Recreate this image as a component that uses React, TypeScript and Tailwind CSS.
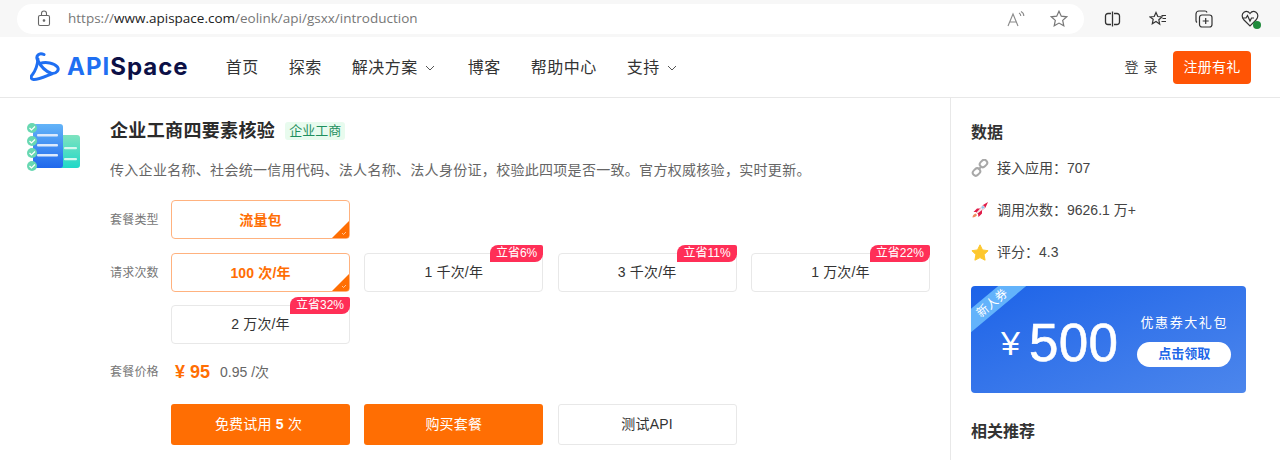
import React from "react";

const F = "font-['Liberation_Sans','Noto_Sans_CJK_SC',sans-serif]";

function Opt({ label, badge, selected }: { label: string; badge?: string; selected?: boolean }) {
  return (
    <div
      className={
        "relative w-[179px] h-[39px] rounded-[4px] border flex items-center justify-center text-[14px] tracking-[0.15px] " +
        (selected ? "border-[#ffb27f] text-[#ff6e03] font-bold pt-[1px]" : "border-[#e8e8e8] text-[#333333]")
      }
    >
      {label}
      {badge && (
        <span className="absolute right-[-1px] top-[-9px] h-[17px] px-[6px] rounded-tl-[8px] rounded-br-[8px] rounded-tr-[2px] bg-[#ff2f57] text-white text-[12px] leading-[17px] tracking-normal font-normal">
          {badge}
        </span>
      )}
      {selected && (
        <svg className="absolute right-0 bottom-0" width="17" height="17" viewBox="0 0 17 17">
          <path d="M17 0V15a2 2 0 0 1-2 2H0Z" fill="#ff6e03" />
          <path d="M10 12l1.5 1.5L14 11" stroke="#ffd9bd" strokeWidth="0.8" fill="none" />
        </svg>
      )}
    </div>
  );
}

function Label({ children }: { children: React.ReactNode }) {
  return <div className="w-[61px] shrink-0 text-[12px] tracking-[0.2px] text-[#777777]">{children}</div>;
}

function Logo() {
  return (
    <svg width="33" height="30" viewBox="4 3 33 30" fill="none" stroke="#1f6ff2" strokeWidth="3" strokeLinecap="round" strokeLinejoin="round">
      <path d="M18 5.5C13 3 9.5 7 11.5 11C14.5 17 20 22.5 25.5 24.5" />
      <path d="M14 14.5C20 12.5 28 14 31.5 18C33.5 21 30.5 24.5 26.5 24.5C20 27 12 31 7.5 30.5C4.5 30 4.5 27.5 6.5 25.5C9.5 21.5 11.5 16 12 10" />
    </svg>
  );
}

function ProductIcon() {
  return (
    <svg width="56" height="50" viewBox="0 0 56 50">
      <defs>
        <linearGradient id="pb" x1="0" y1="0" x2="0" y2="1">
          <stop offset="0" stopColor="#63b4f8" />
          <stop offset="1" stopColor="#1f68ec" />
        </linearGradient>
        <linearGradient id="pg" x1="0" y1="0" x2="0" y2="1">
          <stop offset="0" stopColor="#7fe3bf" />
          <stop offset="1" stopColor="#1fd8c8" />
        </linearGradient>
      </defs>
      <rect x="26" y="12" width="28" height="33" rx="3" fill="url(#pg)" />
      <rect x="38" y="24" width="13" height="2.2" rx="1" fill="#d6f7ee" />
      <rect x="38" y="35" width="13" height="2.2" rx="1" fill="#d6f7ee" />
      <rect x="7" y="1" width="30" height="44" rx="3" fill="url(#pb)" />
      {[11, 21, 31].map((y) => (
        <rect key={y} x="11" y={y} width="21" height="2.4" rx="1" fill="#dbe9fc" />
      ))}
      {[5, 18, 30, 43].map((y) => (
        <g key={y}>
          <circle cx="6" cy={y} r="5" fill="#68d8b2" />
          <path d={`M3.5 ${y}l2 2 3.5-3.5`} stroke="#fff" strokeWidth="1.2" fill="none" />
        </g>
      ))}
    </svg>
  );
}

export default function App() {
  return (
    <div className={"w-[1280px] h-[460px] overflow-hidden bg-white " + F}>
      {/* browser bar */}
      <div className="h-[37px] bg-[#f7f7f7] flex items-center pl-[17px] pr-[18px]">
        <div className="w-[1067px] h-[30px] bg-white rounded-full flex items-center pl-[20px] pr-[16px]">
          <svg width="14" height="17" viewBox="0 0 14 17" fill="none" stroke="#666" strokeWidth="1.1">
            <rect x="1.5" y="5.5" width="11" height="10" rx="1.5" />
            <path d="M4.5 5.5V3.5a2.5 2.5 0 0 1 5 0v2" />
            <circle cx="7" cy="10.5" r="0.8" fill="#666" />
          </svg>
          <div className="ml-[17px] text-[13.5px] text-[#777777] font-['Open_Sans',sans-serif]">
            https://<span className="text-[#222222]">www.apispace.com</span>/eolink/api/gsxx/introduction
          </div>
          <div className="ml-auto flex items-center gap-[25px]">
            <svg width="18" height="16" viewBox="0 0 18 16" fill="none" stroke="#8a8a8a" strokeWidth="1.1">
              <path d="M1 15L6 3l5 12M2.8 11h6.4" />
              <path d="M12 2c1.2.6 1.8 1.6 1.8 3M14 .6c1.8.9 2.8 2.5 2.8 4.4" />
            </svg>
            <svg width="18" height="17" viewBox="0 0 18 17" fill="none" stroke="#777" strokeWidth="1.2">
              <path d="M9 1.2l2.3 5 5.4.6-4 3.6 1.1 5.4L9 13.1l-4.8 2.7 1.1-5.4-4-3.6 5.4-.6z" />
            </svg>
          </div>
        </div>
        <div className="ml-[20px] flex items-center gap-[28px]">
          <svg width="17" height="16" viewBox="0 0 17 16" fill="none" stroke="#333" strokeWidth="1.3">
            <path d="M7 2.5H4A2.5 2.5 0 0 0 1.5 5v6A2.5 2.5 0 0 0 4 13.5h3M10 2.5h3A2.5 2.5 0 0 1 15.5 5v6a2.5 2.5 0 0 1-2.5 2.5h-3" />
            <path d="M8.5 0.5v15" />
          </svg>
          <svg width="18" height="16" viewBox="0 0 18 16" fill="none" stroke="#333" strokeWidth="1.2">
            <path d="M7 1.5l1.8 4 4.2.4-3.2 2.9.9 4.4L7 10.5l-3.7 2.2.9-4.4L1 5.9l4.2-.4z" />
            <path d="M12.5 4.5H17M13.5 7.5H17M12.5 10.5H17" />
          </svg>
          <svg width="18" height="18" viewBox="0 0 18 18" fill="none" stroke="#333" strokeWidth="1.2">
            <rect x="4.5" y="5" width="12.5" height="12" rx="2.5" />
            <path d="M2 12.5C1.3 12 1 11.5 1 10.5V4a3 3 0 0 1 3-3h6c1 0 1.8.6 2 1.5" />
            <path d="M10.7 8v6M7.7 11h6" />
          </svg>
          <div className="relative w-[18px] h-[18px]">
            <svg width="18" height="17" viewBox="0 0 18 17" fill="none" stroke="#333" strokeWidth="1.2">
              <path d="M9 3.5C7.5 1.5 5 .8 3 2.2 .5 4 .6 7.5 3 10l6 6 6-6c2.4-2.5 2.5-6 0-7.8C13 .8 10.5 1.5 9 3.5z" />
              <path d="M1.5 8H5l1.5-2.5L9 11l1.5-3H13" />
            </svg>
            <div className="absolute right-[-2px] bottom-[-1px] w-[8px] h-[8px] rounded-full bg-[#1f8a3b]" />
          </div>
        </div>
      </div>

      {/* site header */}
      <div className="h-[61px] border-b border-[#e8e8e8] flex items-center pl-[30px] pr-[29px]">
        <Logo />
        <div className="ml-[4px] text-[24px] font-bold tracking-[1px] font-['Inter',sans-serif] leading-none">
          <span className="text-[#1f6ff2]">API</span>
          <span className="text-[#0c1046]">Space</span>
        </div>
        <div className="ml-[37px] flex items-center gap-[30px] text-[16px] tracking-[0.5px] text-[#333333] pt-[2px]">
          <span>首页</span>
          <span>探索</span>
          <span className="flex items-center gap-[7px] mr-[3px]">
            解决方案
            <svg width="10" height="6" viewBox="0 0 10 6" fill="none" stroke="#555" strokeWidth="1">
              <path d="M1 1l4 4 4-4" />
            </svg>
          </span>
          <span>博客</span>
          <span>帮助中心</span>
          <span className="flex items-center gap-[7px]">
            支持
            <svg width="10" height="6" viewBox="0 0 10 6" fill="none" stroke="#555" strokeWidth="1">
              <path d="M1 1l4 4 4-4" />
            </svg>
          </span>
        </div>
        <div className="ml-auto text-[14px] text-[#444444] tracking-[0.5px] mr-[15px]">登 录</div>
        <div className="w-[78px] h-[33px] rounded-[4px] bg-[#ff5405] text-white text-[14px] tracking-[0.3px] flex items-center justify-center">
          注册有礼
        </div>
      </div>

      <div className="flex h-[362px]">
        {/* main */}
        <div className="w-[951px] shrink-0 border-r border-[#e8e8e8] flex pl-[26px]">
          <div className="w-[84px] shrink-0 pt-[25px]">
            <ProductIcon />
          </div>
          <div className="flex-1 pt-[22px]">
            <div className="flex items-center h-[22px]">
              <div className="text-[18px] tracking-[0.35px] font-bold text-[#2b2b2b]">企业工商四要素核验</div>
              <div className="ml-[10px] h-[18px] px-[4px] rounded-[3px] bg-[#e8fbee] text-[#1e8f5e] text-[13px] leading-[18px]">企业工商</div>
            </div>
            <div className="mt-[18px] text-[14px] tracking-[0.3px] text-[#666666] leading-[20px]">
              传入企业名称、社会统一信用代码、法人名称、法人身份证{"\uFF0C"}校验此四项是否一致。官方权威核验{"\uFF0C"}实时更新。
            </div>
            <div className="mt-[20px] flex items-start">
              <div className="h-[39px] flex items-center"><Label>套餐类型</Label></div>
              <Opt label="流量包" selected />
            </div>
            <div className="mt-[14px] flex items-start">
              <div className="h-[39px] flex items-center"><Label>请求次数</Label></div>
              <div className="flex flex-wrap gap-x-[14.3px] gap-y-[13px] w-[760px]">
                <Opt label="100 次/年" selected />
                <Opt label="1 千次/年" badge="立省6%" />
                <Opt label="3 千次/年" badge="立省11%" />
                <Opt label="1 万次/年" badge="立省22%" />
                <Opt label="2 万次/年" badge="立省32%" />
              </div>
            </div>
            <div className="mt-[16px] flex items-center h-[24px]">
              <Label>套餐价格</Label>
              <span className="ml-[4px] text-[18px] font-bold text-[#ff6e03]">¥ 95</span>
              <span className="ml-[10px] text-[14px] text-[#666666]">0.95 /次</span>
            </div>
            <div className="mt-[20px] ml-[61px] flex gap-x-[14.3px] text-[14px] tracking-[0.2px]">
              <div className="w-[179px] h-[41px] rounded-[3px] bg-[#ff6e03] text-white flex items-center justify-center pr-[4px]">
                <span>免费试用 <span className="font-bold">5</span> 次</span>
              </div>
              <div className="w-[179px] h-[41px] rounded-[3px] bg-[#ff6e03] text-white flex items-center justify-center">购买套餐</div>
              <div className="w-[179px] h-[41px] rounded-[3px] border border-[#e8e8e8] text-[#333333] flex items-center justify-center">测试API</div>
            </div>
          </div>
        </div>

        {/* sidebar */}
        <div className="flex-1 pl-[20px] pr-[34px] pt-[24px]">
          <div className="text-[16px] font-bold text-[#333333] leading-[22px]">数据</div>
          <div className="mt-[14px] flex flex-col gap-[22px] text-[14px] text-[#444444]">
            <div className="flex items-center h-[20px] gap-[8px]">
              <svg width="18" height="18" viewBox="0 0 18 18" fill="none" stroke="#a8a8a8" strokeWidth="2">
                <rect x="8.5" y="1.5" width="8" height="6" rx="3" transform="rotate(-45 12.5 4.5)" />
                <rect x="1.5" y="10" width="8" height="6" rx="3" transform="rotate(-45 5.5 13)" />
                <path d="M7.5 10.5l3-3" />
              </svg>
              接入应用{"\uFF1A"}707
            </div>
            <div className="flex items-center h-[20px] gap-[8px]">
              <svg width="18" height="18" viewBox="0 0 18 18">
                <path d="M2.5 11L6 7.5h3L12 4l5-3-2.5 5.5L11 9.5v3L7.5 16l-.5-3-2-2z" fill="#e01b48" />
                <path d="M6.5 12.5L5.5 11.5 11 5.5l2 2z" fill="#f8e4e8" />
                <circle cx="11.8" cy="6.4" r="1.7" fill="#8cc4e8" stroke="#fff" strokeWidth="0.6" />
                <path d="M4.5 12.5l1.5 1.5c-.8 1.5-2.5 2.5-4.5 2.5 0-1.8 1.2-3.3 3-4z" fill="#f08a5d" />
              </svg>
              调用次数{"\uFF1A"}9626.1 万+
            </div>
            <div className="flex items-center h-[20px] gap-[8px]">
              <svg width="18" height="17" viewBox="0 0 18 17">
                <path d="M9 .8l2.5 5.1 5.6.8-4 3.9 1 5.6L9 13.6l-5.1 2.6 1-5.6-4-3.9 5.6-.8z" fill="#fdc72e" stroke="#fdc72e" strokeLinejoin="round" />
              </svg>
              评分{"\uFF1A"}4.3
            </div>
          </div>
          <div className="relative mt-[24px] h-[107px] rounded-[4px] overflow-hidden bg-gradient-to-br from-[#1c63e8] to-[#4c86ec] flex items-center text-white">
            <div className="absolute left-[-34px] top-[8px] w-[110px] h-[18px] -rotate-[40deg] bg-[#63b3fb] text-[12px] leading-[18px] text-center">新人券</div>
            <div className="ml-[30px] mt-[6px] text-[34px] font-normal leading-none">¥</div>
            <div className="ml-[9px] mt-[6px] text-[53px] tracking-[0.3px] [-webkit-text-stroke:0.6px_white] leading-none">500</div>
            <div className="ml-[19px] flex flex-col items-center">
              <div className="text-[13px] tracking-[1.6px] leading-[20px]">优惠券大礼包</div>
              <div className="mt-[9px] w-[94px] h-[25px] rounded-full bg-white text-[#2067e8] text-[13px] font-bold flex items-center justify-center">点击领取</div>
            </div>
          </div>
          <div className="mt-[28px] text-[16px] font-bold text-[#333333] leading-[22px]">相关推荐</div>
        </div>
      </div>
    </div>
  );
}
